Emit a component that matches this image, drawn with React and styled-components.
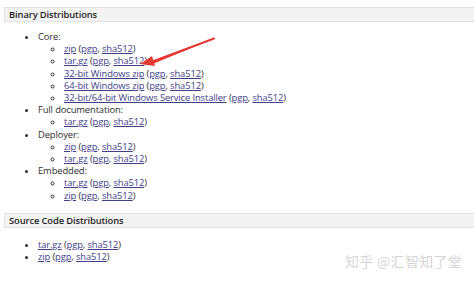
import React from 'react';
import styled, { createGlobalStyle } from 'styled-components';

const GlobalStyle = createGlobalStyle`
  html, body {
    margin: 0;
    padding: 0;
    background: #fff;
  }
  body {
    font-family: "Open Sans", "Noto Sans", sans-serif;
    color: #2e2e2e;
  }
`;

const Page = styled.div`
  position: relative;
  width: 474px;
  height: 287px;
  overflow: hidden;
  padding: 7px 0 0 4px;
  box-sizing: border-box;
`;

const SectionHead = styled.h3`
  margin: 0;
  height: 15px;
  width: 476px;
  box-sizing: border-box;
  border: 1px solid #e2e2e2;
  background: #f3f3f3;
  padding: 0 0 0 4px;
  font-size: 9.4px;
  letter-spacing: -0.12px;
  line-height: 13px;
  font-weight: 600;
  color: #1e1e1e;
`;

const TopList = styled.ul`
  margin: ${p => p.$top}px 0 0 0;
  padding: 0 0 0 34px;
  list-style: disc;
  font-size: 9.4px;
  letter-spacing: -0.12px;
  line-height: 12.2px;
`;

const SubList = styled.ul`
  margin: 0;
  padding: 0 0 0 26px;
  list-style: circle;
`;

const Item = styled.li`
  white-space: nowrap;
`;

const Link = styled.a`
  color: #3e3e8a;
  text-decoration: underline;
`;

const Arrow = styled.svg`
  position: absolute;
  left: 130px;
  top: 34px;
`;

const Watermark = styled.div`
  position: absolute;
  left: 345px;
  top: 251px;
  font-family: "Noto Sans CJK SC", sans-serif;
  font-size: 14px;
  color: #d6d6d6;
  letter-spacing: 0.3px;
`;

const Spacer = styled.div`
  height: ${p => p.$h}px;
`;

const Dl = ({ name }) => (
  <Item>
    <Link>{name}</Link> (<Link>pgp</Link>, <Link>sha512</Link>)
  </Item>
);

export default function App() {
  return (
    <>
      <GlobalStyle />
      <Page>
        <SectionHead>Binary Distributions</SectionHead>
        <TopList $top={9}>
          <Item>
            Core:
            <SubList>
              <Dl name="zip" />
              <Dl name="tar.gz" />
              <Dl name="32-bit Windows zip" />
              <Dl name="64-bit Windows zip" />
              <Dl name="32-bit/64-bit Windows Service Installer" />
            </SubList>
          </Item>
          <Item>
            Full documentation:
            <SubList>
              <Dl name="tar.gz" />
            </SubList>
          </Item>
          <Item>
            Deployer:
            <SubList>
              <Dl name="zip" />
              <Dl name="tar.gz" />
            </SubList>
          </Item>
          <Item>
            Embedded:
            <SubList>
              <Dl name="tar.gz" />
              <Dl name="zip" />
            </SubList>
          </Item>
        </TopList>
        <Spacer $h={11} />
        <SectionHead>Source Code Distributions</SectionHead>
        <TopList $top={11}>
          <Dl name="tar.gz" />
          <Dl name="zip" />
        </TopList>
        <Arrow width="90" height="36" viewBox="0 0 90 36">
          <path d="M83 5 L20 27.5 L21.5 30.5 Z" fill="#e53935" />
          <path d="M84 4.5 L20 28.5" stroke="#e53935" strokeWidth="2" strokeLinecap="round" />
          <path d="M10 30 L22 22 L25 32 Z" fill="#e53935" />
        </Arrow>
        <Watermark>知乎 @汇智知了堂</Watermark>
      </Page>
    </>
  );
}
